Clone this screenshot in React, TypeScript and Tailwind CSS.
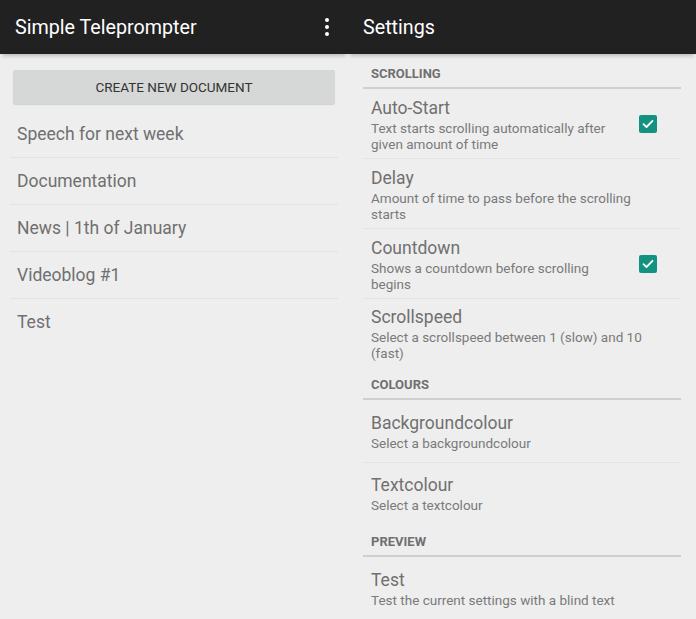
import React from 'react';

const docs = ['Speech for next week', 'Documentation', 'News | 1th of January', 'Videoblog #1', 'Test'];

type Pref = { title: string; summary: string[]; checked?: boolean; h: string };
type Group = { name: string; items: Pref[] };

const groups: Group[] = [
  {
    name: 'SCROLLING',
    items: [
      { title: 'Auto-Start', summary: ['Text starts scrolling automatically after', 'given amount of time'], checked: true, h: 'h-[70px]' },
      { title: 'Delay', summary: ['Amount of time to pass before the scrolling', 'starts'], h: 'h-[70px]' },
      { title: 'Countdown', summary: ['Shows a countdown before scrolling', 'begins'], checked: true, h: 'h-[70px]' },
      { title: 'Scrollspeed', summary: ['Select a scrollspeed between 1 (slow) and 10', '(fast)'], h: 'h-[67px]' },
    ],
  },
  {
    name: 'COLOURS',
    items: [
      { title: 'Backgroundcolour', summary: ['Select a backgroundcolour'], h: 'h-[63px]' },
      { title: 'Textcolour', summary: ['Select a textcolour'], h: 'h-[60px]' },
    ],
  },
  {
    name: 'PREVIEW',
    items: [{ title: 'Test', summary: ['Test the current settings with a blind text'], h: 'h-[62px]' }],
  },
];

const Checkbox = () => (
  <div className="w-[18px] h-[18px] rounded-[2px] bg-[#13927f] flex items-center justify-center">
    <svg width="12" height="10" viewBox="0 0 12 10" fill="none">
      <path d="M1.5 5.2 L4.5 8 L10.5 1.8" stroke="white" strokeWidth="1.8" strokeLinecap="round" strokeLinejoin="round" />
    </svg>
  </div>
);

const ActionBar = ({ title, menu }: { title: string; menu?: boolean }) => (
  <div className="h-[54px] shrink-0 bg-[#212121] flex items-center justify-between pl-[15px] pr-[19px] relative z-10 shadow-[0_4px_4px_-2px_rgba(0,0,0,0.22)]">
    <span className="text-white text-[19.7px] pt-[1px]">{title}</span>
    {menu && (
      <div className="flex flex-col gap-[3px]">
        <span className="w-[4px] h-[4px] rounded-full bg-white" />
        <span className="w-[4px] h-[4px] rounded-full bg-white" />
        <span className="w-[4px] h-[4px] rounded-full bg-white" />
      </div>
    )}
  </div>
);

export default function App() {
  return (
    <div className="w-[696px] h-[619px] flex bg-[#eeeeee] overflow-hidden" style={{ fontFamily: 'Roboto, "Liberation Sans", sans-serif' }}>
      {/* Left: document list */}
      <div className="w-[348px] flex flex-col">
        <ActionBar title="Simple Teleprompter" menu />
        <div className="px-[10px] pt-[16px]">
          <div className="mx-[3px] h-[34px] bg-[#d6d7d7] rounded-[2px] flex items-center justify-center text-[13.5px] text-[#333] shadow-[0_1px_1px_rgba(0,0,0,0.12)]">
            CREATE NEW DOCUMENT
          </div>
          <div className="mt-[7px]">
            {docs.map((d, i) => (
              <div key={d} className={`h-[47px] flex items-center pl-[7px] text-[17.5px] text-[#707070] ${i < docs.length - 1 ? 'border-b border-[#e2e2e2]' : ''}`}>
                {d}
              </div>
            ))}
          </div>
        </div>
      </div>

      {/* Right: settings */}
      <div className="w-[348px] flex flex-col">
        <ActionBar title="Settings" />
        <div className="pl-[15px] pr-[15px] pt-[1px]">
          {groups.map(g => (
            <div key={g.name}>
              <div className="h-[34px] flex items-end pb-[4px] pl-[8px] text-[13px] font-bold text-[#707070] border-b-2 border-[#cfcfcf]">
                {g.name}
              </div>
              {g.items.map((it, i) => (
                <div key={it.title} className={`${it.h} flex items-center pl-[8px] pr-[24px] ${i < g.items.length - 1 ? 'border-b border-[#e2e2e2]' : ''}`}>
                  <div className="flex-1">
                    <div className="text-[17.5px] leading-[24px] text-[#707070]">{it.title}</div>
                    {it.summary.map(s => (
                      <div key={s} className="text-[13.5px] leading-[16px] text-[#7a7a7a]">{s}</div>
                    ))}
                  </div>
                  {it.checked && <Checkbox />}
                </div>
              ))}
            </div>
          ))}
        </div>
      </div>
    </div>
  );
}
